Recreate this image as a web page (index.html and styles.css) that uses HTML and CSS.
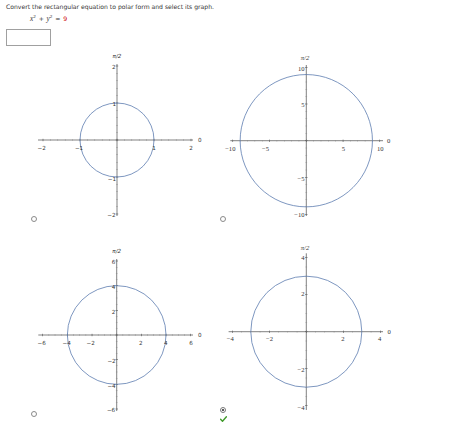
FILE: index.html
```html
<!DOCTYPE html>
<html>
<head>
<meta charset="utf-8">
<link rel="stylesheet" href="styles.css">
</head>
<body>
<div class="page">
  <p class="prompt">Convert the rectangular equation to polar form and select its graph.</p>
  <p class="equation"><i>x</i><sup>2</sup> + <i>y</i><sup>2</sup> = <span class="given">9</span></p>
  <div class="answer-box"></div>

  <div class="choices">
    <!-- choice 1 -->
    <div class="choice">
      <svg class="graph" width="170" height="168" viewBox="0 0 170 168">
        <line class="axis" x1="1" y1="90" x2="156" y2="90"/>
        <line class="axis" x1="80" y1="14" x2="80" y2="166"/>
        <line class="tick" x1="5.75" y1="90" x2="154.6" y2="90" stroke-dasharray="0.5 6.9"/>
        <line class="tick major" x1="5.75" y1="90" x2="154.6" y2="90" stroke-dasharray="0.5 36.5"/>
        <line class="tick" x1="80" y1="15.75" x2="80" y2="164.6" stroke-dasharray="0.5 6.9"/>
        <line class="tick major" x1="80" y1="15.75" x2="80" y2="164.6" stroke-dasharray="0.5 36.5"/>
        <circle class="curve" cx="80" cy="90" r="37"/>
        <text class="lbl sans pi" x="80" y="8">π/2</text>
        <text class="lbl sans" x="161" y="92">0</text>
        <text class="lbl sans mid" x="4.7" y="100.3">−2</text>
        <text class="lbl sans mid" x="42" y="100.3">−1</text>
        <text class="lbl sans mid" x="117" y="100.3">1</text>
        <text class="lbl sans mid" x="154" y="100.3">2</text>
        <text class="lbl sans end" x="78.5" y="18.7">2</text>
        <text class="lbl sans end" x="79" y="56">1</text>
        <text class="lbl sans end" x="79" y="131">−1</text>
        <text class="lbl sans end" x="78.5" y="167">−2</text>
      </svg>
      <span class="radio"></span>
    </div>

    <!-- choice 2 -->
    <div class="choice">
      <svg class="graph" width="170" height="168" viewBox="0 0 170 168">
        <line class="axis" x1="4.3" y1="90.7" x2="157" y2="90.7"/>
        <line class="axis" x1="80.3" y1="15" x2="80.3" y2="166"/>
        <line class="tick" x1="6.55" y1="90.7" x2="154.1" y2="90.7" stroke-dasharray="0.5 6.85"/>
        <line class="tick major" x1="6.55" y1="90.7" x2="154.1" y2="90.7" stroke-dasharray="0.5 36.25"/>
        <line class="tick" x1="80.3" y1="16.95" x2="80.3" y2="164.5" stroke-dasharray="0.5 6.85"/>
        <line class="tick major" x1="80.3" y1="16.95" x2="80.3" y2="164.5" stroke-dasharray="0.5 36.25"/>
        <circle class="curve" cx="80.3" cy="90.7" r="66.15"/>
        <text class="lbl serif pi" x="79" y="10">π/2</text>
        <text class="lbl serif" x="161" y="93">0</text>
        <text class="lbl serif mid" x="4.3" y="100.5">−10</text>
        <text class="lbl serif mid" x="39.5" y="100.5">−5</text>
        <text class="lbl serif mid" x="117.3" y="100.5">5</text>
        <text class="lbl serif mid" x="154.3" y="100.5">10</text>
        <text class="lbl serif end" x="78.5" y="20.5">10</text>
        <text class="lbl serif end" x="78.5" y="57">5</text>
        <text class="lbl serif end" x="78.5" y="130.5">−5</text>
        <text class="lbl serif end" x="78.5" y="167">−10</text>
      </svg>
      <span class="radio"></span>
    </div>

    <!-- choice 3 -->
    <div class="choice">
      <svg class="graph" width="170" height="168" viewBox="0 0 170 168">
        <line class="axis" x1="1.3" y1="90" x2="156" y2="90"/>
        <line class="axis" x1="79.7" y1="14" x2="79.7" y2="166"/>
        <line class="tick" x1="5.45" y1="90" x2="154" y2="90" stroke-dasharray="0.5 5.6667"/>
        <line class="tick major" x1="5.45" y1="90" x2="154" y2="90" stroke-dasharray="0.5 24.167"/>
        <line class="tick" x1="79.7" y1="15.75" x2="79.7" y2="164.3" stroke-dasharray="0.5 5.6667"/>
        <line class="tick major" x1="79.7" y1="15.75" x2="79.7" y2="164.3" stroke-dasharray="0.5 24.167"/>
        <circle class="curve" cx="79.7" cy="90" r="49.33"/>
        <text class="lbl sans pi" x="79.7" y="8">π/2</text>
        <text class="lbl sans" x="161" y="92">0</text>
        <text class="lbl sans mid" x="4.7" y="100.3">−6</text>
        <text class="lbl sans mid" x="29.7" y="100.3">−4</text>
        <text class="lbl sans mid" x="53.7" y="100.3">−2</text>
        <text class="lbl sans mid" x="103.7" y="100.3">2</text>
        <text class="lbl sans mid" x="128.7" y="100.3">4</text>
        <text class="lbl sans mid" x="154" y="100.3">6</text>
        <text class="lbl sans end" x="78.2" y="18.7">6</text>
        <text class="lbl sans end" x="78.2" y="43.7">4</text>
        <text class="lbl sans end" x="78.2" y="68.7">2</text>
        <text class="lbl sans end" x="78.7" y="118">−2</text>
        <text class="lbl sans end" x="78.7" y="142.7">−4</text>
        <text class="lbl sans end" x="78.2" y="167">−6</text>
      </svg>
      <span class="radio"></span>
    </div>

    <!-- choice 4 (selected, correct) -->
    <div class="choice">
      <svg class="graph" width="170" height="164" viewBox="0 0 170 164">
        <line class="axis" x1="2.6" y1="86.7" x2="157" y2="86.7"/>
        <line class="axis" x1="80.3" y1="8.3" x2="80.3" y2="165"/>
        <line class="tick" x1="6.05" y1="86.7" x2="154.6" y2="86.7" stroke-dasharray="0.5 8.75"/>
        <line class="tick major" x1="6.05" y1="86.7" x2="154.6" y2="86.7" stroke-dasharray="0.5 36.5"/>
        <line class="tick" x1="80.3" y1="12.45" x2="80.3" y2="161" stroke-dasharray="0.5 8.75"/>
        <line class="tick major" x1="80.3" y1="12.45" x2="80.3" y2="161" stroke-dasharray="0.5 36.5"/>
        <circle class="curve" cx="80.3" cy="86.7" r="55.5"/>
        <text class="lbl serif pi" x="79" y="4.7">π/2</text>
        <text class="lbl serif" x="161.6" y="89.3">0</text>
        <text class="lbl serif mid" x="4.3" y="96">−4</text>
        <text class="lbl serif mid" x="43.6" y="96">−2</text>
        <text class="lbl serif mid" x="117" y="96">2</text>
        <text class="lbl serif mid" x="153.6" y="96">4</text>
        <text class="lbl serif end" x="78.5" y="14.7">4</text>
        <text class="lbl serif end" x="78.5" y="51.3">2</text>
        <text class="lbl serif end" x="78.5" y="127">−2</text>
        <text class="lbl serif end" x="78.5" y="164.7">−4</text>
      </svg>
      <span class="radio checked"></span>
      <svg class="check" width="7" height="6" viewBox="0 0 7 6">
        <path d="M0.6 3.2 L2.5 5.2 L6.4 0.8" />
      </svg>
    </div>
  </div>
</div>
</body>
</html>
```

FILE: styles.css
```css
html, body {
  margin: 0;
  padding: 0;
  background: #ffffff;
}

.page {
  padding: 2.5px 0 0 6px;
  font-family: "DejaVu Sans", Verdana, sans-serif;
  color: #333333;
}

.prompt {
  margin: 0;
  font-size: 6.1px;
  line-height: 7px;
}

.equation {
  margin: 5.5px 0 0 24px;
  font-size: 6.2px;
  line-height: 8px;
  word-spacing: 0.8px;
}

.equation i {
  font-family: "Liberation Serif", "Times New Roman", serif;
  font-size: 7.2px;
}

.equation sup {
  font-size: 4.2px;
  line-height: 0;
  vertical-align: 3px;
}

.given {
  color: #cc0000;
}

.answer-box {
  margin-top: 6px;
  width: 45px;
  height: 17px;
  box-sizing: border-box;
  border: 1px solid #a0a0a0;
  background: #ffffff;
}

.choices {
  margin: 4px 0 0 25px;
  display: grid;
  grid-template-columns: 188.7px 188.7px;
  row-gap: 23px;
  align-items: start;
}

.choice {
  display: flex;
  flex-direction: column;
  align-items: flex-start;
}

.graph {
  display: block;
  margin-left: 6px;
  overflow: visible;
}

.radio {
  display: block;
  margin-top: -2px;
  width: 6px;
  height: 6px;
  box-sizing: border-box;
  border: 1px solid #8a8a8a;
  border-radius: 50%;
  background: #ffffff;
  position: relative;
}

.radio.checked {
  border-color: #777777;
}

.radio.checked::after {
  content: "";
  position: absolute;
  left: 1px;
  top: 1px;
  width: 2px;
  height: 2px;
  border-radius: 50%;
  background: #222222;
}

.check {
  display: block;
  margin: 3px 0 0 0.5px;
}

.check path {
  fill: none;
  stroke: #3f9a2a;
  stroke-width: 1.4;
  stroke-linecap: round;
  stroke-linejoin: round;
}

.axis {
  stroke: #4a4a4a;
  stroke-width: 0.7;
}

.tick {
  stroke: #888888;
  stroke-width: 1.6;
}

.tick.major {
  stroke: #555555;
  stroke-width: 2.6;
}

.curve {
  fill: none;
  stroke: #5d7cb0;
  stroke-width: 0.8;
}

.lbl {
  fill: #333333;
}

.lbl.sans {
  font-family: "DejaVu Sans", Verdana, sans-serif;
  font-size: 5.6px;
}

.lbl.serif {
  font-family: "Liberation Serif", "Times New Roman", serif;
  font-size: 6.6px;
}

.lbl.pi {
  text-anchor: middle;
  font-style: italic;
}

.lbl.mid {
  text-anchor: middle;
}

.lbl.end {
  text-anchor: end;
}
```
